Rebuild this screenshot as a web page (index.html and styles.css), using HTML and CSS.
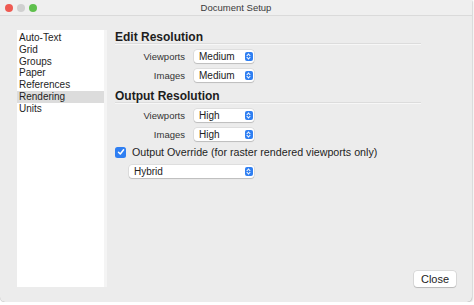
FILE: index.html
```html
<!DOCTYPE html>
<html lang="en">
<head>
    <meta charset="UTF-8">
    <title>Document Setup</title>
    <link rel="stylesheet" href="styles.css">
</head>
<body>
    <div class="window">
        <div class="titlebar">
            <div class="lights">
                <span class="light red"></span>
                <span class="light gray"></span>
                <span class="light green"></span>
            </div>
            <div class="title">Document Setup</div>
        </div>
        <div class="content">
            <ul class="sidebar">
                <li>Auto-Text</li>
                <li>Grid</li>
                <li>Groups</li>
                <li>Paper</li>
                <li>References</li>
                <li class="selected">Rendering</li>
                <li>Units</li>
            </ul>
            <div class="panel">
                <h2 class="section-title">Edit Resolution</h2>
                <div class="row">
                    <span class="label">Viewports</span>
                    <div class="select">Medium<span class="stepper"></span></div>
                </div>
                <div class="row">
                    <span class="label">Images</span>
                    <div class="select">Medium<span class="stepper"></span></div>
                </div>
                <h2 class="section-title second">Output Resolution</h2>
                <div class="row">
                    <span class="label">Viewports</span>
                    <div class="select">High<span class="stepper"></span></div>
                </div>
                <div class="row">
                    <span class="label">Images</span>
                    <div class="select">High<span class="stepper"></span></div>
                </div>
                <label class="check-row">
                    <span class="checkbox">
                        <svg width="8" height="8" viewBox="0 0 8 8"><path d="M1.5 4.2 L3.3 6 L6.6 1.8" fill="none" stroke="#fff" stroke-width="1.5" stroke-linecap="round" stroke-linejoin="round"/></svg>
                    </span>
                    Output Override (for raster rendered viewports only)
                </label>
                <div class="select wide">Hybrid<span class="stepper"></span></div>
                <button class="close-btn">Close</button>
            </div>
        </div>
    </div>
</body>
</html>
```
FILE: styles.css
```css
* {
    box-sizing: border-box;
}
body {
    margin: 0;
    background: #ffffff;
    font-family: "Liberation Sans", Arial, sans-serif;
    color: #222;
}
.window {
    width: 472px;
    height: 302px;
    background: #ececec;
    border-radius: 0 0 5px 5px;
    box-shadow: 0 0 1px rgba(0,0,0,0.35), 1px 1px 2px rgba(0,0,0,0.15);
    display: flex;
    flex-direction: column;
}
.titlebar {
    height: 16px;
    background: #efefef;
    border-bottom: 1px solid #dadada;
    display: flex;
    align-items: center;
    position: relative;
}
.lights {
    display: flex;
    gap: 4px;
    padding-left: 5px;
}
.light {
    width: 8px;
    height: 8px;
    border-radius: 50%;
}
.red { background: #ee5a52; }
.gray { background: #d0d0d0; }
.green { background: #5fc04d; }
.title {
    position: absolute;
    left: 0;
    right: 0;
    text-align: center;
    font-size: 9.5px;
    color: #3a3a3a;
}
.content {
    flex: 1;
    display: flex;
    padding: 14px 16px 15px 17px;
}
.sidebar {
    list-style: none;
    margin: 0;
    padding: 0;
    width: 90px;
    background: #fff;
    border-right: 3px solid #f4f4f4;
    font-size: 10px;
    color: #1e1e1e;
}
.sidebar li {
    height: 11.8px;
    line-height: 11.8px;
    padding-left: 2px;
}
.sidebar li:first-child {
    margin-top: 2px;
}
.sidebar .selected {
    background: #dcdcdc;
}
.panel {
    flex: 1;
    display: flex;
    flex-direction: column;
    padding-left: 8px;
}
.section-title {
    width: 306px;
    margin: 0;
    font-size: 12px;
    font-weight: bold;
    color: #1d1d1d;
    height: 14px;
    line-height: 14px;
    border-bottom: 1px solid #dcdcdc;
    box-shadow: 0 1px 0 #f7f7f7;
    margin-bottom: 6px;
}
.section-title.second {
    margin-top: 1px;
}
.row {
    display: flex;
    align-items: center;
    height: 13px;
    margin-bottom: 6px;
}
.label {
    width: 70px;
    text-align: right;
    font-size: 9.5px;
    color: #333;
    margin-right: 9px;
}
.select {
    position: relative;
    width: 60px;
    height: 13px;
    line-height: 13px;
    background: #fff;
    border-radius: 3px;
    box-shadow: 0 0 0 0.5px rgba(0,0,0,0.12), 0 1px 1px rgba(0,0,0,0.15);
    font-size: 10px;
    padding-left: 5px;
    color: #222;
}
.select.wide {
    width: 125px;
    margin-left: 14px;
}
.stepper {
    position: absolute;
    right: 1px;
    top: 2px;
    width: 8px;
    height: 9px;
    border-radius: 2px;
    background: #2f7ff2;
}
.stepper::before,
.stepper::after {
    content: "";
    position: absolute;
    left: 2px;
    width: 2px;
    height: 2px;
    border-left: 1px solid #fff;
    border-top: 1px solid #fff;
}
.stepper::before {
    top: 2px;
    transform: rotate(45deg);
}
.stepper::after {
    bottom: 2px;
    transform: rotate(-135deg);
}
.check-row {
    display: flex;
    align-items: center;
    font-size: 10.7px;
    color: #1e1e1e;
    height: 14px;
    margin-top: -2px;
    margin-bottom: 6px;
}
.checkbox {
    width: 11px;
    height: 11px;
    border-radius: 2.5px;
    background: #2f7ff2;
    display: flex;
    align-items: center;
    justify-content: center;
    margin-right: 6px;
}
.close-btn {
    margin-top: auto;
    align-self: flex-end;
    width: 42px;
    height: 16px;
    padding: 0;
    border: none;
    border-radius: 3px;
    background: #fff;
    box-shadow: 0 0 0 0.5px rgba(0,0,0,0.15), 0 1px 1px rgba(0,0,0,0.15);
    font-family: "Liberation Sans", Arial, sans-serif;
    font-size: 11px;
    color: #222;
}
```
